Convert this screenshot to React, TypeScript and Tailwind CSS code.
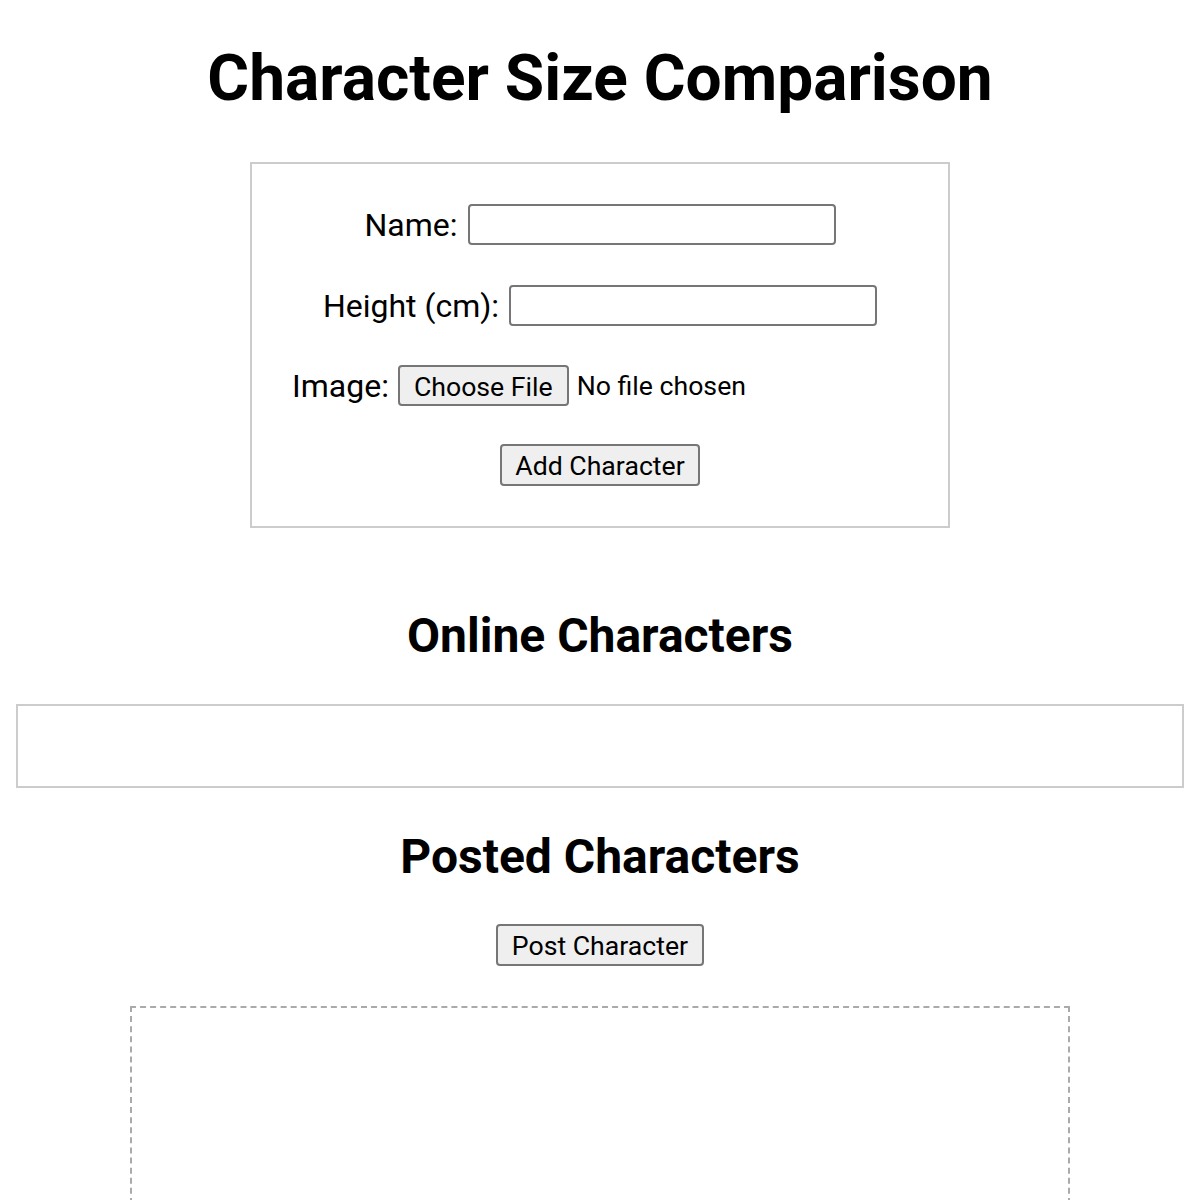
export default function App() {
  return (
    <div className="flex min-h-[1200px] flex-col items-center bg-white px-4 font-['Roboto',sans-serif] text-black">
      <h1 className="mt-[47px] text-[64px] leading-none font-bold">Character Size Comparison</h1>

      <div className="mt-[51px] flex w-[700px] flex-col items-center border-2 border-[#cccccc] px-[40px] pt-[40px] pb-[40px]">
        <div className="flex h-[41px] items-center justify-center gap-[10px]">
          <label className="text-[32px]">Name:</label>
          <input className="h-[41px] w-[368px] rounded-[4px] border-2 border-[#767676] bg-white" />
        </div>
        <div className="mt-[40px] flex h-[41px] items-center justify-center gap-[10px]">
          <label className="text-[32px]">Height (cm):</label>
          <input className="h-[41px] w-[368px] rounded-[4px] border-2 border-[#767676] bg-white" />
        </div>
        <div className="mt-[39px] flex h-[41px] items-center justify-center gap-[9px]">
          <label className="text-[32px]">Image:</label>
          <div className="flex w-[510px] items-center gap-[8px]">
            <button className="h-[41px] rounded-[4px] border-2 border-[#767676] bg-[#efefef] px-[14px] text-[26.67px]">
              Choose File
            </button>
            <span className="text-[26.67px]">No file chosen</span>
          </div>
        </div>
        <button className="mt-[38px] h-[42px] w-[200px] rounded-[4px] border-2 border-[#767676] bg-[#efefef] text-[26.67px]">
          Add Character
        </button>
      </div>

      <h2 className="mt-[84px] text-[48px] leading-none font-bold">Online Characters</h2>
      <div className="mt-[44px] h-[84px] w-full border-2 border-[#cccccc]" />

      <h2 className="mt-[45px] text-[48px] leading-none font-bold">Posted Characters</h2>
      <button className="mt-[43px] h-[42px] w-[208px] rounded-[4px] border-2 border-[#767676] bg-[#efefef] text-[26.67px]">
        Post Character
      </button>
      <div className="mt-[40px] h-[400px] w-[940px] border-2 border-dashed border-[#aaaaaa]" />
    </div>
  );
}
